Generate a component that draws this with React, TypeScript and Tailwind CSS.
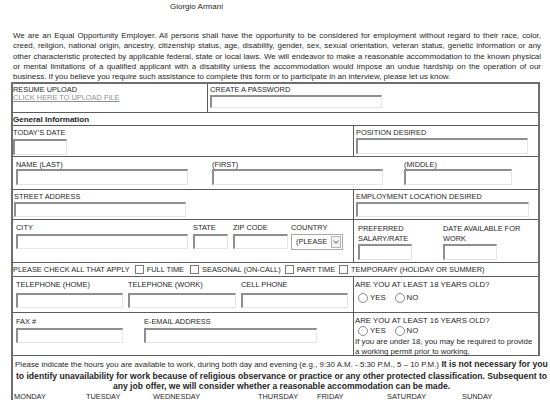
import React from "react";

// bevelled text box like an old IE input
const field =
  "bg-white border-t-2 border-l-2 border-b border-r border-t-[#8e8e8e] border-l-[#8e8e8e] border-b-[#e4e4e4] border-r-[#e4e4e4]";

function Check() {
  return <span className="inline-block w-[9px] h-[9px] border border-[#7a7a7a] bg-white shrink-0" />;
}

function Radio() {
  return <span className="inline-block w-[10px] h-[10px] rounded-full border border-[#8a8a8a] bg-white shrink-0" />;
}

function App() {
  return (
    <div
      className="w-[550px] h-[400px] overflow-hidden bg-white text-[#262626] text-[7.4px]"
      style={{ fontFamily: '"Liberation Sans", Arial, sans-serif' }}
    >
      <div className="pl-[170px] pt-[2px] leading-[10px] text-[8px]">Giorgio Armani</div>

      <p className="ml-[13px] mt-[19px] w-[528px] text-justify leading-[10.3px] text-[7.9px]">
        We are an Equal Opportunity Employer. All persons shall have the opportunity to be considered for employment
        without regard to their race, color, creed, religion, national origin, ancestry, citizenship status, age,
        disability, gender, sex, sexual orientation, veteran status, genetic information or any other characteristic
        protected by applicable federal, state or local laws. We will endeavor to make a reasonable accommodation to the
        known physical or mental limitations of a qualified applicant with a disability unless the accommodation would
        impose an undue hardship on the operation of our business. If you believe you require such assistance to
        complete this form or to participate in an interview, please let us know.
      </p>

      <div className="ml-[11px] w-[529px] border-t-2 border-l-2 border-r-2 border-[#6e6e6e] leading-[8px]">
        {/* resume / password */}
        <div className="flex h-[29px] border-b border-[#5c5c5c]">
          <div className="w-[195px] border-r border-[#5c5c5c] pt-[2px]">
            <div>RESUME UPLOAD</div>
            <div className="text-[#8f8f8f] underline">CLICK HERE TO UPLOAD FILE</div>
          </div>
          <div className="pl-[2px] pt-[2px]">
            <div>CREATE A PASSWORD</div>
            <div className={`${field} mt-[1px] w-[172px] h-[13px]`} />
          </div>
        </div>

        <div className="h-[13px] border-b border-[#5c5c5c] flex items-center pt-[1px] font-bold text-[8px]">
          General Information
        </div>

        {/* date / position */}
        <div className="flex h-[31px] border-b border-[#5c5c5c]">
          <div className="w-[341px] border-r border-[#5c5c5c] pt-[3px]">
            <div>TODAY&apos;S DATE</div>
            <div className={`${field} mt-[2px] w-[54px] h-[16px]`} />
          </div>
          <div className="pl-[2px] pt-[3px]">
            <div>POSITION DESIRED</div>
            <div className={`${field} mt-[1px] w-[172px] h-[16px]`} />
          </div>
        </div>

        {/* name */}
        <div className="flex h-[33px] border-b border-[#5c5c5c] pl-[3px] pt-[4px]">
          <div className="w-[196px]">
            <div>NAME (LAST)</div>
            <div className={`${field} w-[172px] h-[16px]`} />
          </div>
          <div className="w-[192px]">
            <div>(FIRST)</div>
            <div className={`${field} w-[171px] h-[16px]`} />
          </div>
          <div>
            <div>(MIDDLE)</div>
            <div className={`${field} w-[108px] h-[16px]`} />
          </div>
        </div>

        {/* street / location */}
        <div className="flex h-[30px] border-b border-[#5c5c5c]">
          <div className="w-[341px] border-r border-[#5c5c5c] pt-[3px] pl-[1px]">
            <div>STREET ADDRESS</div>
            <div className={`${field} mt-[1px] w-[172px] h-[15px]`} />
          </div>
          <div className="pl-[2px] pt-[3px]">
            <div>EMPLOYMENT LOCATION DESIRED</div>
            <div className={`${field} mt-[1px] w-[173px] h-[15px]`} />
          </div>
        </div>

        {/* city row */}
        <div className="flex h-[43px] border-b border-[#5c5c5c]">
          <div className="w-[341px] border-r border-[#5c5c5c] pt-[4px] pl-[3px] flex">
            <div className="w-[177px]">
              <div>CITY</div>
              <div className={`${field} mt-[2px] w-[172px] h-[15px]`} />
            </div>
            <div className="w-[40px]">
              <div>STATE</div>
              <div className={`${field} mt-[2px] w-[35px] h-[15px]`} />
            </div>
            <div className="w-[58px]">
              <div>ZIP CODE</div>
              <div className={`${field} mt-[2px] w-[55px] h-[15px]`} />
            </div>
            <div>
              <div>COUNTRY</div>
              <div className="mt-[2px] w-[52px] h-[16px] border border-[#a9a9a9] bg-white flex items-center">
                <span className="pl-[4px] flex-1 overflow-hidden whitespace-nowrap">(PLEASE</span>
                <span className="w-[10px] h-[12px] mr-[1px] border border-[#b5b5b5] bg-[#f3f3f3] flex items-center justify-center">
                  <svg width="6" height="4" viewBox="0 0 6 4">
                    <path d="M0.5 0.8 L3 3.2 L5.5 0.8" fill="none" stroke="#555" strokeWidth="1" />
                  </svg>
                </span>
              </div>
            </div>
          </div>
          <div className="pl-[4px] pt-[4px] flex leading-[10px]">
            <div className="w-[85px]">
              <div>PREFERRED</div>
              <div>SALARY/RATE</div>
              <div className={`${field} w-[54px] h-[16px]`} />
            </div>
            <div>
              <div>DATE AVAILABLE FOR</div>
              <div>WORK</div>
              <div className={`${field} w-[54px] h-[16px]`} />
            </div>
          </div>
        </div>

        {/* check all that apply */}
        <div className="h-[14px] border-b border-[#5c5c5c] flex items-center gap-[4px] whitespace-nowrap">
          <span className="mr-[1px]">PLEASE CHECK ALL THAT APPLY</span>
          <span className="flex items-center gap-[3px]">
            <Check />
            FULL TIME
          </span>
          <span className="flex items-center gap-[3px] ml-[2px]">
            <Check />
            SEASONAL (ON-CALL)
          </span>
          <span className="flex items-center gap-[3px]">
            <Check />
            PART TIME
          </span>
          <span className="flex items-center gap-[3px]">
            <Check />
            TEMPORARY (HOLIDAY OR SUMMER)
          </span>
        </div>

        {/* telephone / 18 */}
        <div className="flex h-[36px] border-b border-[#5c5c5c]">
          <div className="w-[341px] border-r border-[#5c5c5c] pt-[4px] pl-[3px] flex">
            <div className="w-[112px]">
              <div>TELEPHONE (HOME)</div>
              <div className={`${field} mt-[4px] w-[107px] h-[15px]`} />
            </div>
            <div className="w-[113px]">
              <div>TELEPHONE (WORK)</div>
              <div className={`${field} mt-[4px] w-[108px] h-[15px]`} />
            </div>
            <div>
              <div>CELL PHONE</div>
              <div className={`${field} mt-[4px] w-[107px] h-[15px]`} />
            </div>
          </div>
          <div className="pl-[1px] pt-[4px] text-[7.8px]">
            <div>ARE YOU AT LEAST 18 YEARS OLD?</div>
            <div className="flex items-center gap-[2px] pl-[3px] mt-[4px]">
              <Radio />
              <span className="mr-[7px]">YES</span>
              <Radio />
              <span>NO</span>
            </div>
          </div>
        </div>

        {/* fax / email / 16 */}
        <div className="flex h-[43px] border-b border-[#5c5c5c]">
          <div className="w-[341px] border-r border-[#5c5c5c] pt-[5px] pl-[3px] flex">
            <div className="w-[128px]">
              <div>FAX #</div>
              <div className={`${field} mt-[2px] w-[107px] h-[15px]`} />
            </div>
            <div>
              <div>E-EMAIL ADDRESS</div>
              <div className={`${field} mt-[2px] w-[173px] h-[15px]`} />
            </div>
          </div>
          <div className="pl-[1px] pt-[4px] text-[7.8px]">
            <div>ARE YOU AT LEAST 16 YEARS OLD?</div>
            <div className="flex items-center gap-[2px] pl-[3px] mt-[1px]">
              <Radio />
              <span className="mr-[7px]">YES</span>
              <Radio />
              <span>NO</span>
            </div>
            <div className="leading-[10px] mt-[1px]">
              If you are under 18, you may be required to provide
              <br />a working permit prior to working.
            </div>
          </div>
        </div>
      </div>

      {/* hours */}
      <div className="ml-[11px] w-[539px] border-l-2 border-[#6e6e6e] pt-[3px]">
        <div className="text-center leading-[10.5px] text-[8.6px]">
          <span className="text-[7.9px]">
            Please indicate the hours you are available to work, during both day and evening (e.g., 9:30 A.M. - 5:30
            P.M., 5 – 10 P.M.)
          </span>{" "}
          <b>
            It is not necessary for you to identify unavailability for work because of religious observance or practice
            or any other protected classification. Subsequent to any job offer, we will consider whether a reasonable
            accommodation can be made.
          </b>
        </div>
        <div className="flex leading-[10px] pl-[1px]">
          <span className="w-[72px]">MONDAY</span>
          <span className="w-[67px]">TUESDAY</span>
          <span className="w-[105px]">WEDNESDAY</span>
          <span className="w-[59px]">THURSDAY</span>
          <span className="w-[70px]">FRIDAY</span>
          <span className="w-[75px]">SATURDAY</span>
          <span>SUNDAY</span>
        </div>
      </div>
    </div>
  );
}

export default App;
